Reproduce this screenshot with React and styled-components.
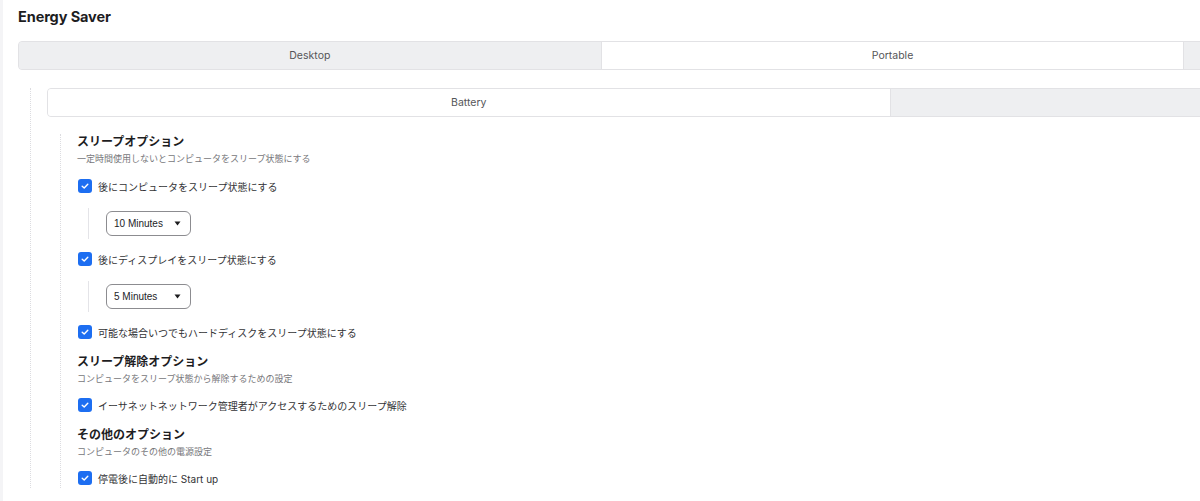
import React, { useState } from 'react';
import styled, { createGlobalStyle } from 'styled-components';

const GlobalStyle = createGlobalStyle`
  html, body {
    margin: 0;
    padding: 0;
    background: #ffffff;
    overflow: hidden;
  }
  body {
    font-family: "Inter", "Noto Sans CJK JP", sans-serif;
    color: #1d1d1f;
  }
`;

const Page = styled.div`
  width: 1197px;
  height: 501px;
  border-left: 3px solid #f4f4f6;
  overflow: hidden;
`;

const Title = styled.h1`
  margin: 0 0 0 15px;
  height: 34px;
  line-height: 34px;
  font-size: 14.5px;
  font-weight: 700;
  color: #1d1d1f;
  letter-spacing: -0.1px;
`;

const TabBar = styled.div`
  display: flex;
  width: ${(props) => props.width}px;
  height: 29px;
  margin: ${(props) => props.margin};
  border: 1px solid #e2e2e5;
  border-radius: 4px;
  box-sizing: border-box;
  overflow: hidden;
  background: #eeeff1;
`;

const Tab = styled.button`
  flex: 1;
  border: none;
  border-left: ${(props) => (props.first ? 'none' : '1px solid #e2e2e5')};
  background: ${(props) => (props.active ? '#ffffff' : '#eeeff1')};
  font-family: inherit;
  font-size: 10.5px;
  color: #555558;
  padding: 0;
  cursor: pointer;
`;

const Nested = styled.div`
  margin: ${(props) => props.margin};
  padding-left: ${(props) => props.pad}px;
  border-left: 1px dotted #dcdce0;
`;

const Section = styled.div`
  & + & {
    margin-top: 12px;
  }
`;

const Heading = styled.h2`
  margin: 0;
  height: 16px;
  line-height: 16px;
  font-size: 12px;
  font-weight: 700;
  color: #1d1d1f;
`;

const Sub = styled.p`
  margin: 2px 0 0;
  height: 14px;
  line-height: 14px;
  font-size: 9px;
  color: #77777b;
`;

const Row = styled.label`
  display: flex;
  align-items: center;
  gap: 6px;
  height: 20px;
  margin-top: ${(props) => props.gap}px;
  padding-left: 1px;
  font-size: 10px;
  color: #333336;
  cursor: pointer;
`;

const Box = styled.span`
  width: 14px;
  height: 14px;
  border-radius: 3px;
  background: ${(props) => (props.checked ? '#1d6ef1' : '#ffffff')};
  border: ${(props) => (props.checked ? 'none' : '1px solid #9a9a9e')};
  display: flex;
  align-items: center;
  justify-content: center;
  box-sizing: border-box;
`;

const SelectWrap = styled.div`
  margin: 12px 0 0 11px;
  padding: 3px 0 3px 17px;
  border-left: 1px solid #e4e4e8;
`;

const Select = styled.div`
  width: 85px;
  height: 25px;
  box-sizing: border-box;
  border: 1px solid #8c8c90;
  border-radius: 6px;
  display: flex;
  align-items: center;
  justify-content: space-between;
  padding: 0 9px 0 7px;
  font-family: "Liberation Sans", "Inter", sans-serif;
  font-size: 10px;
  color: #1d1d1f;
  background: #ffffff;
`;

const Check = () => (
  <svg width="10" height="10" viewBox="0 0 10 10">
    <path d="M2.2 5.2 L4.2 7 L7.8 3.2" fill="none" stroke="#ffffff" strokeWidth="1.4" strokeLinecap="round" strokeLinejoin="round" />
  </svg>
);

const Arrow = () => (
  <svg width="7" height="5" viewBox="0 0 7 5">
    <path d="M0.5 0.5 L6.5 0.5 L3.5 4.5 Z" fill="#1d1d1f" />
  </svg>
);

const CheckRow = ({ label, gap = 10 }) => {
  const [checked, setChecked] = useState(true);
  return (
    <Row gap={gap} onClick={() => setChecked(!checked)}>
      <Box checked={checked}>{checked && <Check />}</Box>
      {label}
    </Row>
  );
};

const Dropdown = ({ value }) => (
  <SelectWrap>
    <Select>
      {value}
      <Arrow />
    </Select>
  </SelectWrap>
);

export default function App() {
  const [mode, setMode] = useState(1);
  const [power, setPower] = useState(0);
  return (
    <>
      <GlobalStyle />
      <Page>
        <Title>Energy Saver</Title>
        <TabBar width={1749} margin="7px 0 0 15px">
          {['Desktop', 'Portable', 'Other'].map((t, i) => (
            <Tab key={t} first={i === 0} active={mode === i} onClick={() => setMode(i)}>
              {t}
            </Tab>
          ))}
        </TabBar>
        <Nested margin="18px 0 0 27px" pad={16}>
          <TabBar width={1686} margin="0">
            {['Battery', 'Power Adapter'].map((t, i) => (
              <Tab key={t} first={i === 0} active={power === i} onClick={() => setPower(i)}>
                {t}
              </Tab>
            ))}
          </TabBar>
          <Nested margin="17px 0 0 13px" pad={16}>
            <Section>
              <Heading>スリープオプション</Heading>
              <Sub>一定時間使用しないとコンピュータをスリープ状態にする</Sub>
              <CheckRow label="後にコンピュータをスリープ状態にする" />
              <Dropdown value="10 Minutes" />
              <CheckRow label="後にディスプレイをスリープ状態にする" />
              <Dropdown value="5 Minutes" />
              <CheckRow label="可能な場合いつでもハードディスクをスリープ状態にする" />
            </Section>
            <Section>
              <Heading>スリープ解除オプション</Heading>
              <Sub>コンピュータをスリープ状態から解除するための設定</Sub>
              <CheckRow gap={9} label="イーサネットネットワーク管理者がアクセスするためのスリープ解除" />
            </Section>
            <Section>
              <Heading>その他のオプション</Heading>
              <Sub>コンピュータのその他の電源設定</Sub>
              <CheckRow gap={9} label="停電後に自動的に Start up" />
            </Section>
          </Nested>
        </Nested>
      </Page>
    </>
  );
}
